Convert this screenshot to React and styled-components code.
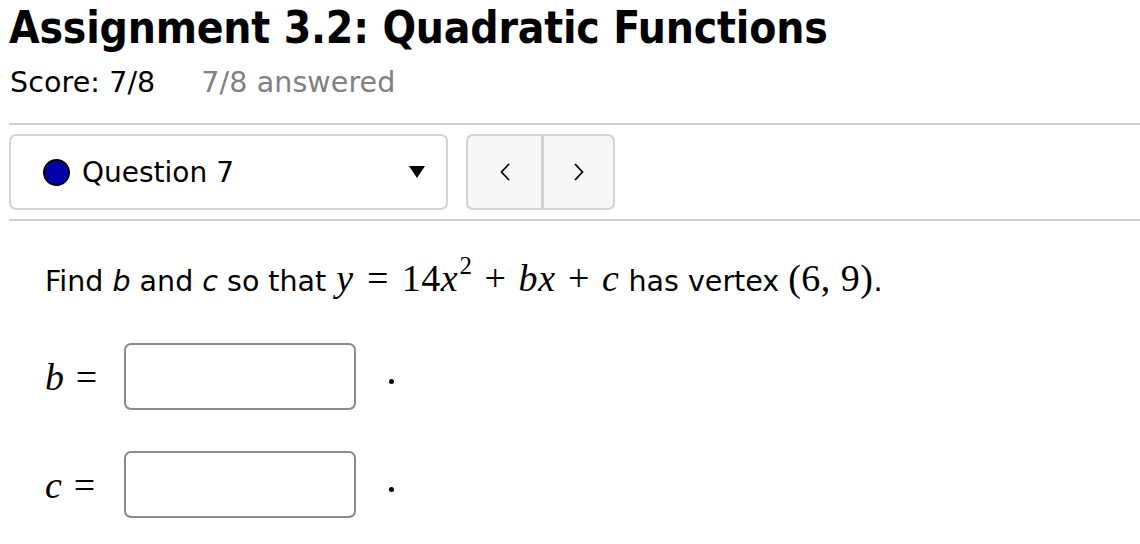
import React from "react";
import styled, { createGlobalStyle } from "styled-components";

const GlobalStyle = createGlobalStyle`
  body {
    margin: 0;
    background: #fff;
    color: #000;
    font-family: "DejaVu Sans", sans-serif;
  }
`;

const Page = styled.div`
  padding: 0 0 0 9px;
  width: 1131px;
`;

const Title = styled.h1`
  margin: 0;
  padding-top: 2px;
  font-family: "DejaVu Sans Condensed", "DejaVu Sans", sans-serif;
  font-size: 44px;
  font-weight: bold;
  line-height: 52px;
  letter-spacing: -0.2px;
`;

const ScoreRow = styled.div`
  display: flex;
  gap: 46px;
  margin-top: 12px;
  font-size: 28.5px;
  line-height: 34px;
  padding-left: 1px;
  letter-spacing: 0.1px;
`;

const Answered = styled.span`
  color: #808080;
`;

const Rule = styled.hr`
  margin: ${(p) => p.$top}px 0 0 0;
  border: none;
  height: 2px;
  background: #d0d0d0;
`;

const Toolbar = styled.div`
  display: flex;
  gap: 18px;
  margin-top: 9px;
`;

const Select = styled.div`
  width: 439px;
  height: 76px;
  box-sizing: border-box;
  border: 2px solid #d3d3d3;
  border-radius: 7px;
  display: flex;
  align-items: center;
  padding: 0 20px 0 32px;
`;

const Dot = styled.span`
  width: 23px;
  height: 23px;
  border-radius: 50%;
  background: #0000a8;
  border: 2px solid #000;
  flex: none;
`;

const SelectLabel = styled.span`
  margin-left: 12px;
  font-size: 28px;
  flex: 1;
`;

const Caret = styled.span`
  width: 0;
  height: 0;
  border-left: 8px solid transparent;
  border-right: 8px solid transparent;
  border-top: 12px solid #000;
  margin-right: 1px;
`;

const NavGroup = styled.div`
  display: flex;
  width: 149px;
  height: 76px;
  box-sizing: border-box;
  border: 2px solid #d3d3d3;
  border-radius: 7px;
  background: #f8f8f8;
  overflow: hidden;
`;

const NavButton = styled.div`
  flex: ${(p) => (p.$divided ? "1" : "0 0 73px")};
  display: flex;
  align-items: center;
  justify-content: center;
  border-left: ${(p) => (p.$divided ? "3px solid #d0d0d0" : "none")};
`;

const QuestionText = styled.p`
  margin: 35px 0 0 36px;
  font-size: 28.5px;
  line-height: 44px;
  white-space: nowrap;
`;

const Var = styled.i`
  font-family: "DejaVu Sans", sans-serif;
`;

const Math = styled.span`
  font-family: "Liberation Serif", "DejaVu Serif", serif;
  font-size: 38px;
  letter-spacing: 0.5px;
  margin: 0 ${(p) => p.$after || 0}px 0 ${(p) => p.$before || 0}px;
`;

const MI = styled.i`
  font-family: "Liberation Serif", serif;
  letter-spacing: 0.8px;
`;

const Sup = styled.span`
  font-size: 25px;
  position: relative;
  top: -17px;
  margin-left: 1px;
`;

const Op = styled.span`
  margin: 0 ${(p) => p.$gap || 10}px;
`;

const AnswerRow = styled.div`
  display: flex;
  align-items: center;
  margin: ${(p) => p.$top}px 0 0 36px;
`;

const Label = styled.span`
  font-family: "Liberation Serif", "DejaVu Serif", serif;
  font-size: 38px;
  width: 79px;
  display: flex;
  align-items: baseline;
`;

const Field = styled.input`
  width: 232px;
  height: 67px;
  box-sizing: border-box;
  border: 2px solid #8a8a8a;
  border-radius: 7px;
  outline: none;
  font-size: 24px;
`;

const Period = styled.span`
  width: 5px;
  height: 5px;
  border-radius: 50%;
  background: #000;
  margin: 10px 0 0 33px;
`;

function Chevron({ left }) {
  return (
    <svg width="12" height="22" viewBox="0 0 12 22">
      <path
        d={left ? "M10 3 L2.5 11 L10 19" : "M2 3 L9.5 11 L2 19"}
        fill="none"
        stroke="#000"
        strokeWidth="1.8"
      />
    </svg>
  );
}

export default function App() {
  return (
    <Page>
      <GlobalStyle />
      <Title>Assignment 3.2: Quadratic Functions</Title>
      <ScoreRow>
        <span>Score: 7/8</span>
        <Answered>7/8 answered</Answered>
      </ScoreRow>
      <Rule $top={23} />
      <Toolbar>
        <Select>
          <Dot />
          <SelectLabel>Question 7</SelectLabel>
          <Caret />
        </Select>
        <NavGroup>
          <NavButton>
            <Chevron left />
          </NavButton>
          <NavButton $divided>
            <Chevron />
          </NavButton>
        </NavGroup>
      </Toolbar>
      <Rule $top={9} />
      <QuestionText>
        Find <Var>b</Var> and <Var>c</Var> so that
        <Math $before={10} $after={9}>
          <MI>y</MI>
          <Op $gap={13}>=</Op>14<MI>x</MI>
          <Sup>2</Sup>
          <Op $gap={12}>+</Op>
          <MI>bx</MI>
          <Op $gap={12}>+</Op>
          <MI>c</MI>
        </Math>
        has vertex
        <Math $before={9}>(6, 9)</Math>.
      </QuestionText>
      <AnswerRow $top={38}>
        <Label>
          <MI>b</MI>
          <Op $gap={11}>=</Op>
        </Label>
        <Field />
        <Period />
      </AnswerRow>
      <AnswerRow $top={41}>
        <Label>
          <MI>c</MI>
          <Op $gap={11}>=</Op>
        </Label>
        <Field />
        <Period />
      </AnswerRow>
    </Page>
  );
}
